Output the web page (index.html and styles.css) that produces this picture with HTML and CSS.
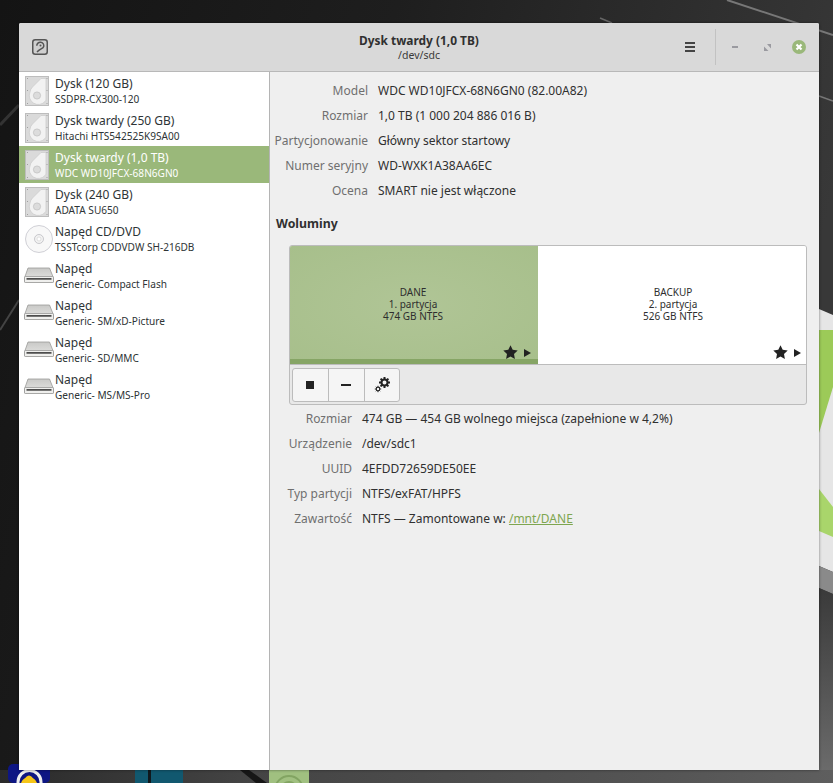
FILE: index.html
```html
<!DOCTYPE html>
<html lang="pl">
<head>
<meta charset="utf-8">
<title>Dyski</title>
<link rel="stylesheet" href="styles.css">
</head>
<body>
<div class="desktop">
  <svg class="wallpaper" width="833" height="783" viewBox="0 0 833 783">
    <defs>
      <linearGradient id="wp" x1="0" y1="0" x2="1" y2="0.25">
        <stop offset="0" stop-color="#141414"/><stop offset="0.45" stop-color="#1e1e1e"/><stop offset="1" stop-color="#383838"/>
      </linearGradient>
      <linearGradient id="low" x1="0" y1="0" x2="0" y2="1">
        <stop offset="0" stop-color="#3a3a3a"/><stop offset="1" stop-color="#6e6e6e"/>
      </linearGradient>
      <linearGradient id="floor" x1="0" y1="0" x2="1" y2="0">
        <stop offset="0" stop-color="#2a2a2a"/><stop offset="0.3" stop-color="#444"/><stop offset="0.8" stop-color="#555"/><stop offset="1" stop-color="#5e5e5e"/>
      </linearGradient>
    </defs>
    <rect width="833" height="783" fill="url(#wp)"/>
    <path d="M727 0L833 35" stroke="#777" stroke-width="2" fill="none"/>
    <path d="M600 18L612 23" stroke="#666" stroke-width="1.500" fill="none"/>
    <path d="M819 96L833 101" stroke="#777" stroke-width="1.500" fill="none"/>
    <path d="M0 125L19 105" stroke="#333" stroke-width="3" fill="none"/>
    <path d="M0 330L19 300" stroke="#444" stroke-width="2" fill="none"/>
    <path d="M819 309L833 315V572L819 566Z" fill="#e6e6e6"/>
    <path d="M819 330H833V387L819 433Z" fill="#9cca58"/>
    <path d="M819 489L833 507V537L819 531Z" fill="#a9d56b"/>
    <path d="M819 566L833 572V594L819 588Z" fill="#8a8a8a"/>
    <path d="M819 588L833 594V783H819Z" fill="url(#low)"/>
    <rect y="770" width="833" height="13" fill="url(#floor)"/>
    <path d="M240 770L256 783H267L249 770Z" fill="#161616"/>
    <rect x="8" y="764" width="42" height="19" rx="5" fill="#0e1683"/>
    <path d="M21 783c2-5 4-4 5-6 2-2 4-2 6 0 1 2 3 1 5 6Z" fill="#f5c518"/>
    <path d="M18 783v-1a11 11 0 0 1 23 0v1" fill="none" stroke="#eee" stroke-width="3"/>
    <rect x="135" y="770" width="48" height="13" fill="#11586f"/>
    <rect x="148" y="770" width="3" height="13" fill="#10181c"/>
    <rect x="269" y="770" width="40" height="13" fill="#a0c080"/>
    <circle cx="289" cy="790" r="14" fill="none" stroke="#82a462" stroke-width="2"/>
    <circle cx="289" cy="790" r="8" fill="none" stroke="#82a462" stroke-width="2"/>
  </svg>

  <main class="window">
    <header class="titlebar">
      <button class="app-btn" aria-label="Dysk">
        <svg width="16" height="16" viewBox="0 0 16 16"><rect x="0.750" y="0.750" width="14.500" height="14.500" rx="2.500" fill="#cfcfcf" stroke="#555" stroke-width="1.500"/><path d="M4.800 6.800a3.500 3.500 0 1 1 6.900 0.700c-0.500 2.200-3.500 2.200-6.700 5.500" fill="none" stroke="#555" stroke-width="1.500"/><circle cx="8.500" cy="6.500" r="1" fill="#555"/></svg>
      </button>
      <div class="title">
        <div class="title-main">Dysk twardy (1,0 TB)</div>
        <div class="title-sub">/dev/sdc</div>
      </div>
      <div class="controls">
        <div class="burger"><span></span><span></span><span></span></div>
        <div class="vsep"></div>
        <div class="wm">
          <span class="wm-min"></span>
          <svg class="wm-max" width="7" height="7" viewBox="0 0 7 7"><path d="M3 0H7V4.500Z M0 2.500V7H4.500Z" fill="#9a9aa0"/></svg>
          <span class="wm-close"><svg width="14" height="14" viewBox="0 0 14 14"><path d="M4.500 4.500L9.500 9.500M9.500 4.500L4.500 9.500" stroke="#fff" stroke-width="2.200"/></svg></span>
        </div>
      </div>
    </header>
    <div class="content">
      <aside class="sidebar">
        <div class="row"><svg class="ico"><use href="#hdd"/></svg><div class="txt"><div class="name">Dysk (120 GB)</div><div class="sub">SSDPR-CX300-120</div></div></div>
        <div class="row"><svg class="ico"><use href="#hdd"/></svg><div class="txt"><div class="name">Dysk twardy (250 GB)</div><div class="sub">Hitachi HTS542525K9SA00</div></div></div>
        <div class="row selected"><svg class="ico"><use href="#hdd"/></svg><div class="txt"><div class="name">Dysk twardy (1,0 TB)</div><div class="sub">WDC WD10JFCX-68N6GN0</div></div></div>
        <div class="row"><svg class="ico"><use href="#hdd"/></svg><div class="txt"><div class="name">Dysk (240 GB)</div><div class="sub">ADATA SU650</div></div></div>
        <div class="row"><svg class="ico"><use href="#cd"/></svg><div class="txt"><div class="name">Napęd CD/DVD</div><div class="sub">TSSTcorp CDDVDW SH-216DB</div></div></div>
        <div class="row"><svg class="ico"><use href="#drive"/></svg><div class="txt"><div class="name">Napęd</div><div class="sub">Generic- Compact Flash</div></div></div>
        <div class="row"><svg class="ico"><use href="#drive"/></svg><div class="txt"><div class="name">Napęd</div><div class="sub">Generic- SM/xD-Picture</div></div></div>
        <div class="row"><svg class="ico"><use href="#drive"/></svg><div class="txt"><div class="name">Napęd</div><div class="sub">Generic- SD/MMC</div></div></div>
        <div class="row"><svg class="ico"><use href="#drive"/></svg><div class="txt"><div class="name">Napęd</div><div class="sub">Generic- MS/MS-Pro</div></div></div>
      </aside>
      <section class="detail">
        <dl class="props disk-props">
          <dt>Model</dt><dd>WDC WD10JFCX-68N6GN0 (82.00A82)</dd>
          <dt>Rozmiar</dt><dd>1,0 TB (1 000 204 886 016 B)</dd>
          <dt>Partycjonowanie</dt><dd>Główny sektor startowy</dd>
          <dt>Numer seryjny</dt><dd>WD-WXK1A38AA6EC</dd>
          <dt>Ocena</dt><dd>SMART nie jest włączone</dd>
        </dl>
        <h2 class="heading">Woluminy</h2>
        <div class="volumes">
          <div class="bar">
            <div class="part part-a">
              <div class="part-label">DANE<br>1. partycja<br>474 GB NTFS</div>
              <div class="marks"><svg width="15" height="14" viewBox="0 0 15 14"><use href="#star"/></svg><span class="tri"></span></div>
              <div class="used"></div>
            </div>
            <div class="part part-b">
              <div class="part-label">BACKUP<br>2. partycja<br>526 GB NTFS</div>
              <div class="marks"><svg width="15" height="14" viewBox="0 0 15 14"><use href="#star"/></svg><span class="tri"></span></div>
            </div>
          </div>
          <div class="toolbar">
            <div class="btn-group">
              <button class="tbtn" aria-label="Stop"><span class="stop"></span></button>
              <button class="tbtn" aria-label="Usuń"><span class="minus"></span></button>
              <button class="tbtn" aria-label="Ustawienia">
                <svg width="16" height="16" viewBox="0 0 16 16">
                  <g fill="none" stroke="#222">
                    <circle cx="10.500" cy="5.500" r="3" stroke-width="2"/>
                    <path d="M10.500 0v2M10.500 9v2M5 5.500h2M14 5.500h2M6.600 1.600l1.400 1.400M13 8l1.400 1.400M14.400 1.600l-1.400 1.400M8 8l-1.400 1.400" stroke-width="2"/>
                    <circle cx="4" cy="12" r="1.800" stroke-width="1.200"/>
                    <path d="M4 8.800v1M4 14.200v1M0.800 12h1M6.200 12h1M1.800 9.800l.7.7M5.500 13.500l.7.7M6.200 9.800l-.7.7M2.500 13.500l-.7.7" stroke-width="1"/>
                  </g>
                </svg>
              </button>
            </div>
          </div>
        </div>
        <dl class="props vol-props">
          <dt>Rozmiar</dt><dd>474 GB — 454 GB wolnego miejsca (zapełnione w 4,2%)</dd>
          <dt>Urządzenie</dt><dd>/dev/sdc1</dd>
          <dt>UUID</dt><dd>4EFDD72659DE50EE</dd>
          <dt>Typ partycji</dt><dd>NTFS/exFAT/HPFS</dd>
          <dt>Zawartość</dt><dd>NTFS — Zamontowane w: <a href="#">/mnt/DANE</a></dd>
        </dl>
      </section>
    </div>
  </main>

  <svg class="defs" width="0" height="0">
    <defs>
      <linearGradient id="metal" x1="0" y1="0" x2="0" y2="1">
        <stop offset="0" stop-color="#c9c9c7"/><stop offset="1" stop-color="#e6e6e4"/>
      </linearGradient>
      <symbol id="hdd" viewBox="0 0 32 32">
        <rect x="2.500" y="1.500" width="23" height="29" fill="#dadada" stroke="#bdbdbd"/>
        <path d="M7 17a8.500 8.500 0 0 1 2.500-5L18 3.500h5V24a3 3 0 0 1-1 2.500a9 9 0 0 1-15-9.500Z" fill="#f2f2f2" stroke="#cacaca" stroke-width="0.700"/>
        <circle cx="14" cy="20.500" r="3.600" fill="#dcdcdc" stroke="#bdbdbd" stroke-width="0.700"/>
        <g fill="#a0a0a0"><rect x="4" y="3" width="1" height="1"/><rect x="23.500" y="3" width="1" height="1"/><rect x="4" y="28" width="1" height="1"/><rect x="23.500" y="28" width="1" height="1"/><rect x="4" y="15" width="1" height="1"/><rect x="23.500" y="15" width="1" height="1"/></g>
      </symbol>
      <symbol id="cd" viewBox="0 0 32 32">
        <circle cx="16" cy="16" r="13.500" fill="#f8f8f8" stroke="#d0d0d6"/>
        <circle cx="16" cy="16" r="4.500" fill="#f2f2f2" stroke="#bdbdc2" stroke-width="0.800"/>
        <circle cx="16" cy="16" r="2" fill="#fff" stroke="#cfcfcf" stroke-width="0.600"/>
      </symbol>
      <symbol id="drive" viewBox="0 0 32 32">
        <path d="M5 8H26.500L30.500 18V22H1.500V18Z" fill="url(#metal)" stroke="#9a9a98" stroke-width="0.800"/>
        <rect x="1.500" y="16.500" width="29" height="6" rx="1" fill="#efefed" stroke="#8e8e8c" stroke-width="0.700"/>
        <rect x="3.500" y="18.200" width="25" height="1.400" fill="#262626"/>
      </symbol>
      <symbol id="star" viewBox="0 0 15 14">
        <path d="M7.500 0.300L9.700 4.800L14.700 5.500L11 9L11.900 14L7.500 11.600L3.100 14L4 9L0.300 5.500L5.300 4.800Z" fill="#222"/>
      </symbol>
    </defs>
  </svg>
</div>
</body>
</html>
```
FILE: styles.css
```css
* { box-sizing: border-box; }
html, body { margin: 0; padding: 0; }
body { font-family: "Noto Sans", sans-serif; font-size: 12px; color: #2e2e2e; }

.desktop { position: relative; width: 833px; height: 783px; overflow: hidden; background: #1c1c1c; }
.wallpaper { position: absolute; left: 0; top: 0; display: block; }
.defs { position: absolute; }

.window {
  position: absolute; left: 19px; top: 23px; width: 800px; height: 747px;
  display: flex; flex-direction: column; background: #efefef;
  border-radius: 2px 2px 0 0; box-shadow: 0 0 3px rgba(0,0,0,.5);
}

.titlebar {
  height: 49px; flex: none; display: flex; align-items: center; position: relative;
  background: #d9d9d9; border-bottom: 1px solid #b8b8b8;
  border-radius: 2px 2px 0 0; padding-left: 13px;
}
.app-btn { width: 16px; height: 16px; padding: 0; border: 0; background: none; display: block; }
.app-btn svg { display: block; }
.title { position: absolute; left: 0; right: 0; top: 9px; text-align: center; pointer-events: none; }
.title-main { font-size: 11.900px; font-weight: 700; line-height: 16px; color: #303030; }
.title-sub { font-size: 10.500px; line-height: 14px; color: #3a3a3a; }
.controls { margin-left: auto; display: flex; align-items: center; height: 36px; }
.burger { display: flex; flex-direction: column; gap: 2px; width: 10px; margin-right: 20px; }
.burger span { display: block; height: 2px; background: #444; }
.vsep { width: 1px; height: 36px; background: #c2c2c2; }
.wm { display: flex; align-items: center; width: 103px; position: relative; height: 36px; padding-left: 16px; }
.wm-min { width: 6px; height: 2px; background: #9a9aa0; flex: none; }
.wm-max { flex: none; margin-left: 26px; }
.wm-close { flex: none; margin-left: 21px; width: 14px; height: 14px; border-radius: 50%; background: #9ab87a; display: block; }
.wm-close svg { display: block; }

.content { flex: 1; display: flex; min-height: 0; }
.sidebar { width: 251px; flex: none; background: #fff; border-right: 1px solid #b4b4b4; }
.row { height: 37px; display: flex; align-items: center; color: #2e3436; }
.row.selected { background: #9ab87a; color: #fff; }
.ico { width: 32px; height: 32px; flex: none; margin-left: 4px; display: block; }
.name { font-size: 12px; line-height: 17px; margin-top: -1px; }
.sub { font-size: 10.100px; line-height: 14px; }

.detail { flex: 1; min-width: 0; padding: 6px 12px 0 0; }
.props { margin: 0; display: grid; grid-auto-rows: 25px; column-gap: 10px; align-items: center; font-size: 12px; }
.props dt { text-align: right; color: #6f6f6f; }
.props dd { margin: 0; color: #303030; }
.props a { color: #7ea650; }
.disk-props { grid-template-columns: 98px 1fr; margin-bottom: 12px; }
.vol-props { grid-template-columns: 82px 1fr; margin-top: 1px; }
.heading { margin: 0 0 13px 6px; font-size: 12.300px; line-height: 17px; font-weight: 700; color: #303030; }

.volumes { margin: 0 0 0 19px; width: 518px; border: 1px solid #bcbcbc; border-radius: 3px; background: #e8e8e8; }
.bar { display: flex; height: 119px; border-bottom: 1px solid #bcbcbc; }
.part { position: relative; display: flex; align-items: center; justify-content: center; text-align: center; font-size: 10px; line-height: 12px; color: #2e2e2e; }
.part-label { margin-top: -2px; }
.part-a .part-label { margin-right: 2px; }
.part-b .part-label { margin-left: 2px; }
.part-a { width: 248px; background: radial-gradient(ellipse at center, #b0c596 0%, #a7bf8b 100%); border-top-left-radius: 2px; }
.part-b { flex: 1; background: #fff; border-top-right-radius: 2px; }
.used { position: absolute; left: 0; right: 0; bottom: 0; height: 5px; background: #86a565; }
.marks { position: absolute; right: 5px; bottom: 5px; display: flex; align-items: center; gap: 6px; z-index: 1; }
.part-a .marks { right: 7px; }
.marks svg { display: block; }
.tri { width: 0; height: 0; border-left: 7px solid #222; border-top: 4px solid transparent; border-bottom: 4px solid transparent; margin-top: 2px; }

.toolbar { height: 39px; padding: 3px 2px; }
.btn-group { display: inline-flex; height: 34px; border: 1px solid #bcbcbc; border-radius: 3px; background: #f5f5f5; }
.tbtn { width: 36px; padding: 0; border: 0; background: none; display: flex; align-items: center; justify-content: center; border-right: 1px solid #bcbcbc; }
.tbtn:last-child { border-right: 0; width: 34px; }
.stop { width: 8px; height: 8px; background: #222; display: block; margin-right: 1px; }
.minus { width: 10px; height: 2px; background: #222; display: block; margin-right: 1px; }
```
